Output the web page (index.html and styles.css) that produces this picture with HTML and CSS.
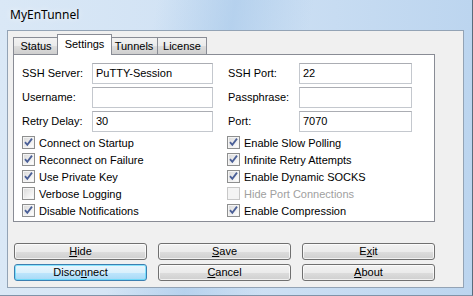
FILE: index.html
```html
<!DOCTYPE html>
<html>
<head>
<meta charset="utf-8">
<link rel="stylesheet" href="styles.css">
</head>
<body>
<div class="window">
  <div class="titlebar">MyEnTunnel</div>
  <div class="client">
    <div class="tabs">
      <div class="tab t-status">Status</div>
      <div class="tab t-settings active">Settings</div>
      <div class="tab t-tunnels">Tunnels</div>
      <div class="tab t-license">License</div>
    </div>
    <div class="panel">
      <div class="fields">
        <div class="lbl">SSH Server:</div><div class="input">PuTTY-Session</div>
        <div class="lbl">SSH Port:</div><div class="input">22</div>
        <div class="lbl">Username:</div><div class="input"></div>
        <div class="lbl">Passphrase:</div><div class="input"></div>
        <div class="lbl">Retry Delay:</div><div class="input">30</div>
        <div class="lbl">Port:</div><div class="input">7070</div>
      </div>
      <div class="checks">
        <div class="chk on">Connect on Startup</div>
        <div class="chk on">Enable Slow Polling</div>
        <div class="chk on">Reconnect on Failure</div>
        <div class="chk on">Infinite Retry Attempts</div>
        <div class="chk on">Use Private Key</div>
        <div class="chk on">Enable Dynamic SOCKS</div>
        <div class="chk">Verbose Logging</div>
        <div class="chk disabled">Hide Port Connections</div>
        <div class="chk on">Disable Notifications</div>
        <div class="chk on">Enable Compression</div>
      </div>
    </div>
    <div class="buttons">
      <div class="btn"><u>H</u>ide</div>
      <div class="btn"><u>S</u>ave</div>
      <div class="btn">E<u>x</u>it</div>
      <div class="btn default">Disco<u>n</u>nect</div>
      <div class="btn"><u>C</u>ancel</div>
      <div class="btn"><u>A</u>bout</div>
    </div>
  </div>
</div>
</body>
</html>
```

FILE: styles.css
```css
html, body {
  margin: 0;
  padding: 0;
}
body {
  width: 473px;
  height: 296px;
  overflow: hidden;
  font-family: "Liberation Sans", Arial, sans-serif;
  font-size: 11px;
  color: #000;
}
.window {
  box-sizing: border-box;
  width: 473px;
  height: 296px;
  padding: 0 8px 7px 7px;
  background:
    linear-gradient(100deg, rgba(255,255,255,0) 30%, rgba(160,196,232,0.55) 45%, rgba(255,255,255,0) 60%),
    linear-gradient(to right, #dae8f6 0%, #cfe1f4 50%, #bcd5ef 100%);
  border-right: 1px solid #5a6b7c;
  border-bottom: 1px solid #8093a8;
  display: flex;
  flex-direction: column;
}
.titlebar {
  height: 30px;
  line-height: 30px;
  padding-left: 3px;
  font-family: "Noto Sans", "Open Sans", sans-serif;
  font-size: 12px;
  color: #000;
  text-shadow: 0 0 6px rgba(255,255,255,0.9);
}
.client {
  flex: 1;
  background: #f0f0f0;
  border: 1px solid #93a3b5;
  box-sizing: border-box;
  padding: 3px 0 0 5px;
  display: flex;
  flex-direction: column;
}
.tabs {
  display: flex;
  align-items: flex-end;
  height: 20px;
  position: relative;
  z-index: 2;
}
.tab {
  box-sizing: border-box;
  height: 17px;
  border: 1px solid #898c95;
  border-bottom: none;
  border-right: none;
  background: linear-gradient(#f2f2f2 0%, #ebebeb 50%, #dddddd 51%, #cfcfcf 100%);
  text-align: center;
  line-height: 17px;
}
.t-status { width: 45px; }
.t-settings { width: 52px; }
.t-tunnels { width: 47px; }
.t-license { width: 50px; border-right: 1px solid #898c95; }
.tab.active {
  width: 55px;
  height: 21px;
  margin: 0 -2px -1px -1px;
  background: #ffffff;
  border-right: 1px solid #898c95;
  line-height: 18px;
  position: relative;
  z-index: 3;
}
.panel {
  box-sizing: border-box;
  width: 422px;
  height: 168px;
  border: 1px solid #898c95;
  background: #ffffff;
  position: relative;
  z-index: 1;
  padding: 8px 0 0 8px;
}
.fields {
  display: grid;
  grid-template-columns: 70px 121px 15px 71px 113px;
  grid-auto-rows: 21px;
  row-gap: 3px;
}
.fields .lbl {
  line-height: 21px;
}
.fields .lbl:nth-child(4n+3) {
  grid-column: 4;
}
.input {
  box-sizing: border-box;
  border: 1px solid #c4c8ce;
  border-top-color: #abadb3;
  background: #fff;
  padding-left: 3px;
  line-height: 19px;
}
.checks {
  margin-top: 2px;
  display: grid;
  grid-template-columns: 205px 1fr;
  grid-auto-rows: 17px;
}
.chk {
  display: flex;
  align-items: center;
  gap: 4px;
}
.chk::before {
  content: "";
  box-sizing: border-box;
  width: 13px;
  height: 13px;
  flex: none;
  border: 1px solid #8e8f8f;
  background:
    linear-gradient(135deg, #dcdcdc 0%, #f6f6f6 80%, #ffffff 100%) content-box,
    #f4f4f4;
  padding: 1px;
}
.chk.on::before {
  background:
    url("data:image/svg+xml;utf8,<svg xmlns='http://www.w3.org/2000/svg' width='11' height='11' viewBox='0 0 11 11'><path d='M2 5.2 L4.3 7.8 L9 1.6' fill='none' stroke='%234a5f97' stroke-width='1.8'/></svg>") center/11px 11px no-repeat,
    linear-gradient(135deg, #dcdcdc 0%, #f6f6f6 80%, #ffffff 100%) content-box,
    #f4f4f4;
}
.chk.disabled {
  color: #a0a0a0;
}
.chk.disabled::before {
  border-color: #c8c8c8;
  background: #f4f4f4;
}
.buttons {
  margin-top: 21px;
  margin-left: 1px;
  display: grid;
  grid-template-columns: repeat(3, 133px);
  grid-auto-rows: 17px;
  column-gap: 11px;
  row-gap: 4px;
}
.btn {
  box-sizing: border-box;
  border: 1px solid #707070;
  border-radius: 3px;
  background: linear-gradient(#f2f2f2 0%, #ebebeb 50%, #dddddd 51%, #cfcfcf 100%);
  box-shadow: inset 0 0 0 1px rgba(255,255,255,0.7);
  text-align: center;
  line-height: 15px;
}
.btn.default {
  border-color: #3c7fb1;
  background: linear-gradient(#eaf6fd 0%, #d9f0fc 50%, #bee6fd 51%, #a7d9f5 100%);
  box-shadow: inset 0 0 0 1px rgba(72,216,251,0.6);
}
.btn u {
  text-decoration-thickness: 1px;
  text-underline-offset: 1px;
}
```
